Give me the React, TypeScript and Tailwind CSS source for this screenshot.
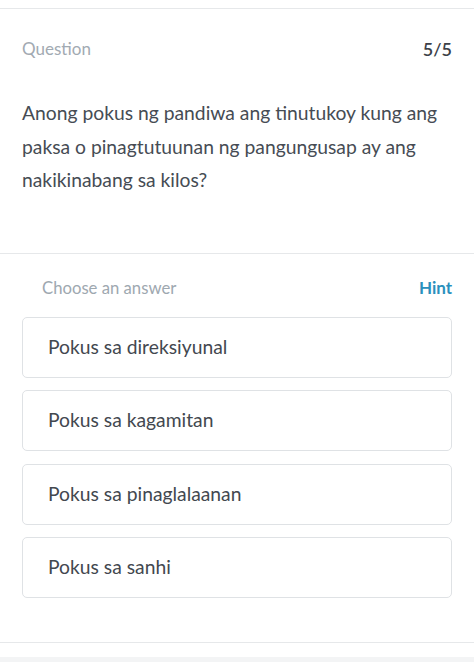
const options = [
  'Pokus sa direksiyunal',
  'Pokus sa kagamitan',
  'Pokus sa pinaglalaanan',
  'Pokus sa sanhi',
]

export default function App() {
  return (
    <div className="min-h-screen bg-white font-['Lato','Noto_Sans',sans-serif]">
      <div className="h-2" />
      <section className="border-t border-[#e6e8ea] px-[22px] pt-[28px] pb-[56px]">
        <div className="flex items-center justify-between leading-6">
          <span className="text-[17px] text-[#a2aab2]">Question</span>
          <span className="text-[18px] font-semibold text-[#3c4148]">5/5</span>
        </div>
        <p className="mt-[35px] text-[19.3px] leading-[33.5px] text-[#464c54]">
          Anong pokus ng pandiwa ang tinutukoy kung ang paksa o pinagtutuunan ng pangungusap ay ang nakikinabang sa kilos?
        </p>
      </section>
      <section className="border-t border-[#e6e8ea] px-[22px] pt-[22px] pb-[44px]">
        <div className="flex items-center justify-between pl-[20px] leading-6">
          <span className="text-[16.7px] text-[#9ea8b0]">Choose an answer</span>
          <button className="text-[17px] font-bold text-[#2a90bd]">Hint</button>
        </div>
        <div className="mt-[17px] flex flex-col gap-[12.5px]">
          {options.map((o) => (
            <button
              key={o}
              className="flex h-[61px] items-center rounded-[5px] border border-[#dfe2e5] px-[25px] text-left text-[19.3px] text-[#43484f]"
            >
              {o}
            </button>
          ))}
        </div>
      </section>
      <div className="h-[15px] border-t border-[#e6e8ea]" />
      <div className="h-[5px] bg-[#f3f4f5]" />
    </div>
  )
}
